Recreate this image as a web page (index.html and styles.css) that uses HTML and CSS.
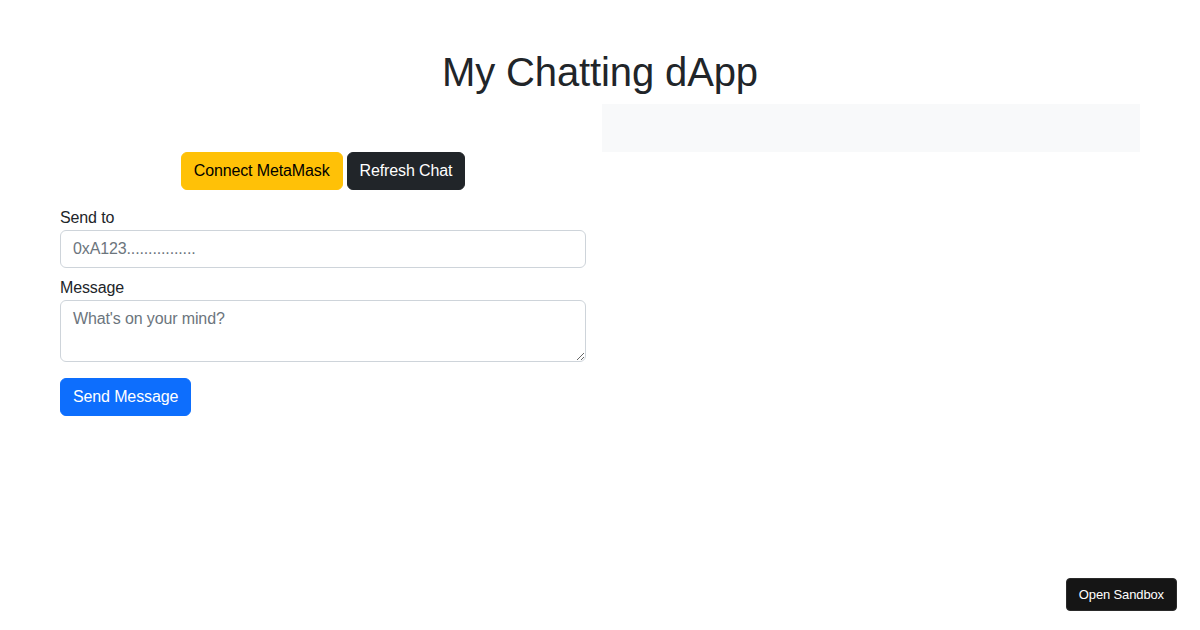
FILE: index.html
```html
<!DOCTYPE html>
<html lang="en">
<head>
<meta charset="utf-8">
<title>My Chatting dApp</title>
<link rel="stylesheet" href="styles.css">
</head>
<body>
<main class="page">
  <h1 class="title">My Chatting dApp</h1>
  <div class="columns">
    <section class="left">
      <div class="actions">
        <button class="btn btn-warning">Connect MetaMask</button>
        <button class="btn btn-dark">Refresh Chat</button>
      </div>
      <form class="form">
        <label class="form-label" for="to">Send to</label>
        <input class="form-control field-to" id="to" type="text" placeholder="0xA123................">
        <label class="form-label" for="msg">Message</label>
        <textarea class="form-control field-msg" id="msg" rows="2" placeholder="What's on your mind?"></textarea>
        <button type="button" class="btn btn-primary send">Send Message</button>
      </form>
    </section>
    <section class="right">
      <div class="chat-box"></div>
    </section>
  </div>
</main>
<button class="sandbox-btn">Open Sandbox</button>
</body>
</html>
```
FILE: styles.css
```css
* { box-sizing: border-box; }
html, body { margin: 0; padding: 0; }
body {
  font-family: "Liberation Sans", Arial, Helvetica, sans-serif;
  font-size: 16px;
  line-height: 1.5;
  color: #212529;
  background: #fff;
  letter-spacing: -0.008em;
}
.page {
  padding: 48px 60px 0;
}
.title {
  margin: 0 0 8px;
  font-size: 40px;
  font-weight: 400;
  line-height: 48px;
  text-align: center;
}
.columns {
  display: grid;
  grid-template-columns: 526px 538px;
  column-gap: 16px;
  align-items: start;
}
.actions {
  margin-top: 48px;
  display: flex;
  justify-content: center;
  gap: 4px;
}
.btn {
  font-family: inherit;
  font-size: 16px;
  letter-spacing: inherit;
  line-height: 24px;
  padding: 6px 12px;
  border: 1px solid transparent;
  border-radius: 6px;
  cursor: pointer;
}
.btn-warning { background: #ffc107; border-color: #ffc107; color: #000; }
.btn-dark { background: #212529; border-color: #212529; color: #fff; }
.btn-primary { background: #0d6efd; border-color: #0d6efd; color: #fff; }
.form {
  margin-top: 16px;
  display: flex;
  flex-direction: column;
  align-items: stretch;
}
.form-label {
  display: block;
  line-height: 24px;
  margin-bottom: 0;
}
.form-control {
  display: block;
  width: 100%;
  font-family: inherit;
  font-size: 16px;
  letter-spacing: inherit;
  line-height: 24px;
  padding: 6px 12px;
  color: #212529;
  background: #fff;
  border: 1px solid #ced4da;
  border-radius: 6px;
}
.form-control::placeholder { color: #6c757d; opacity: 1; }
.field-to { height: 38px; margin-bottom: 8px; }
.field-msg { height: 62px; resize: vertical; margin-bottom: 16px; }
.send { align-self: flex-start; }
.chat-box {
  height: 48px;
  background: #f8f9fa;
}
.sandbox-btn {
  position: fixed;
  right: 23px;
  bottom: 19px;
  height: 33px;
  padding: 0 12px;
  background: #151515;
  color: #fff;
  border: 1px solid #2a2a2a;
  border-radius: 4px;
  font-family: "Liberation Sans", Arial, sans-serif;
  font-size: 13px;
  letter-spacing: -0.01em;
}
```
